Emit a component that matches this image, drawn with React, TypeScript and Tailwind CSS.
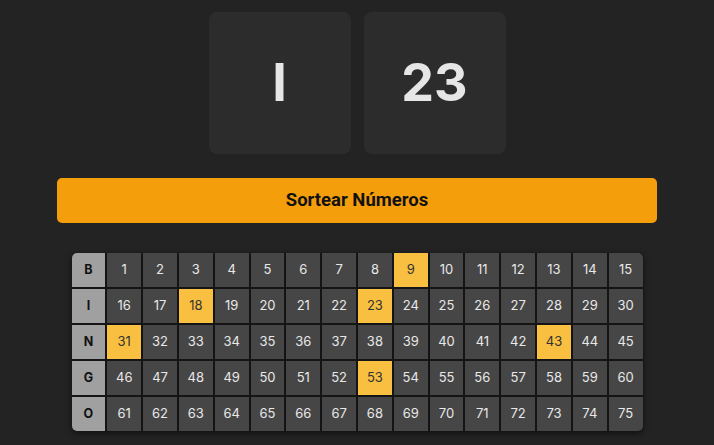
import React from "react";

const letters = ["B", "I", "N", "G", "O"];
const drawn = new Set([9, 18, 23, 31, 43, 53]);

export default function App() {
  return (
    <div className="min-h-[445px] w-full bg-[#232323] flex flex-col items-center pt-[12px]" style={{ fontFamily: "Inter, 'Noto Sans', sans-serif" }}>
      <div className="flex gap-[13px]">
        <div className="w-[142px] h-[142px] rounded-[8px] bg-[#2c2c2c] flex items-center justify-center text-[52px] font-bold text-[#e6e6e6]">I</div>
        <div className="w-[142px] h-[142px] rounded-[8px] bg-[#2c2c2c] flex items-center justify-center text-[52px] font-bold text-[#e6e6e6]">23</div>
      </div>
      <button
        className="mt-[24px] w-[600px] h-[45px] rounded-[5px] bg-[#f59e0b] text-[18.5px] font-bold text-[#111]"
        style={{ fontFamily: "Roboto, 'Liberation Sans', sans-serif" }}
      >
        Sortear Números
      </button>
      <div className="mt-[30px] w-[571px] h-[178px] grid grid-cols-16 grid-rows-5 gap-[2px] bg-[#141414] rounded-[5px] overflow-hidden shadow-[0_2px_6px_rgba(0,0,0,0.6)]">
        {letters.map((l, r) => (
          <React.Fragment key={l}>
            <div className="bg-[#a0a0a0] flex items-center justify-center text-[12.5px] font-bold text-[#111]">{l}</div>
            {Array.from({ length: 15 }, (_, c) => {
              const n = r * 15 + c + 1;
              const on = drawn.has(n);
              return (
                <div
                  key={n}
                  className={
                    on
                      ? "bg-[#f9bf40] flex items-center justify-center text-[13px] text-[#333]"
                      : "bg-[#464646] flex items-center justify-center text-[13px] text-[#e8e8e8]"
                  }
                >
                  {n}
                </div>
              );
            })}
          </React.Fragment>
        ))}
      </div>
    </div>
  );
}
